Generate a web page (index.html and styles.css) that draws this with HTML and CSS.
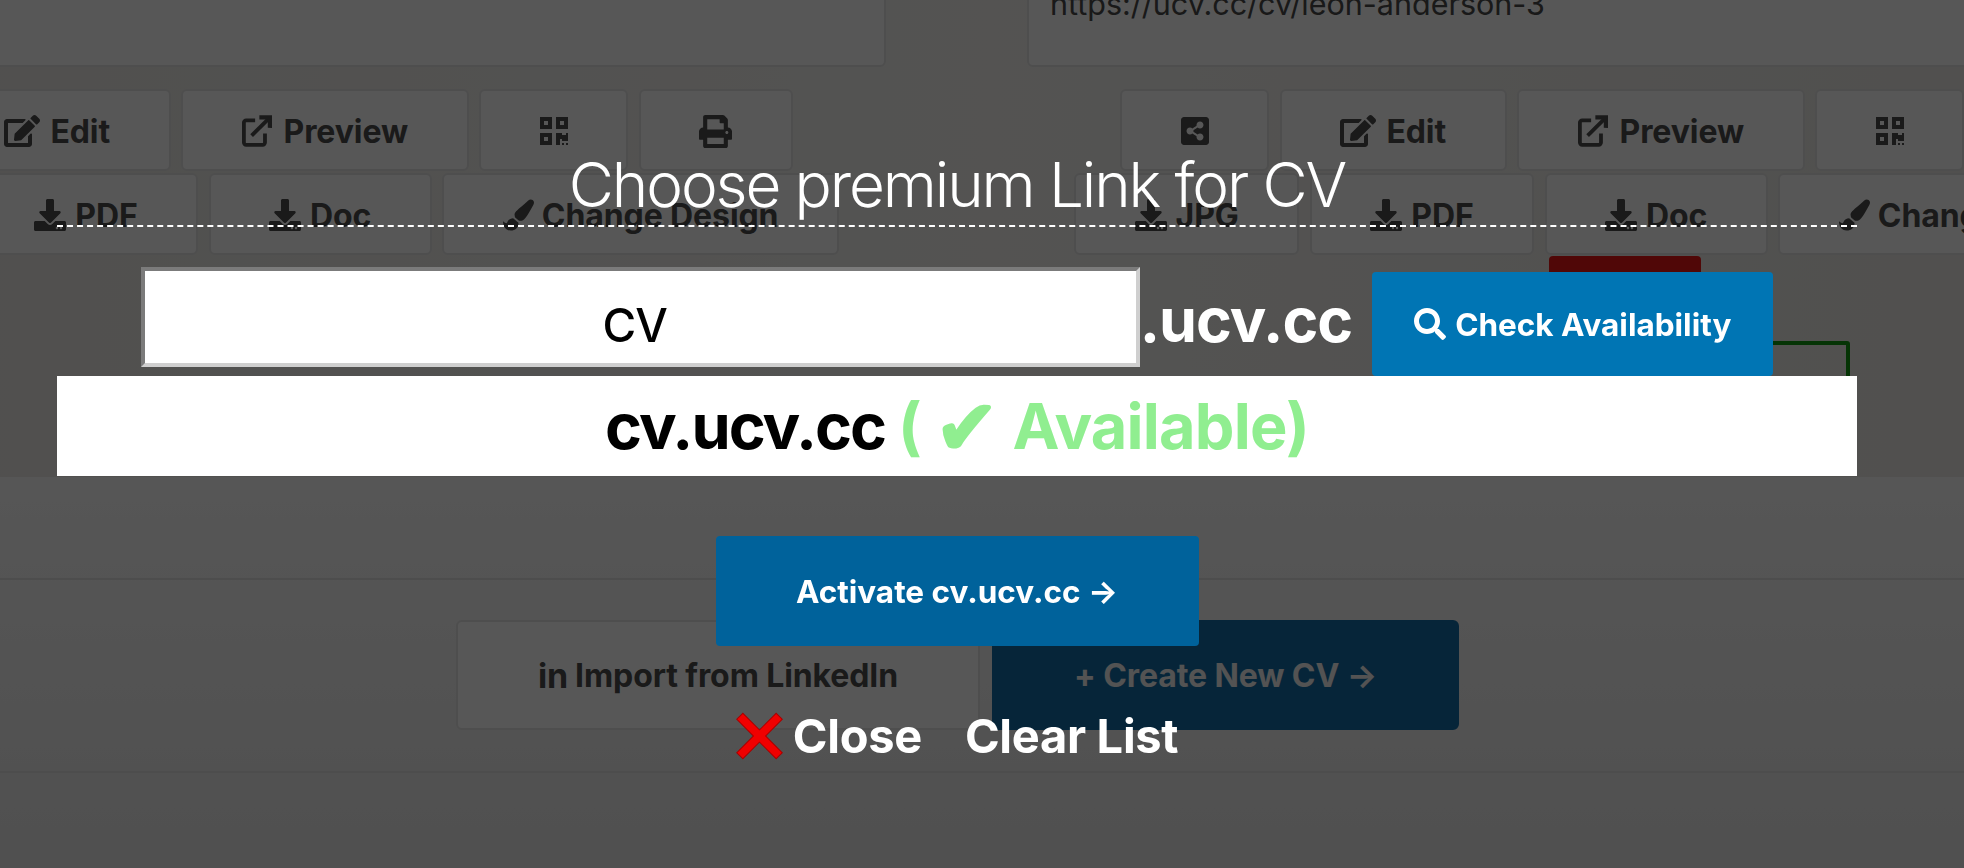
FILE: index.html
```html
<!DOCTYPE html>
<html lang="en">

<head>
    <meta charset="UTF-8">
    <meta name="viewport" content="width=device-width, initial-scale=1.0">
    <title>Choose premium Link for CV</title>
    <link rel="stylesheet" href="styles.css">
</head>

<body>
    <svg class="icon-defs" width="0" height="0" aria-hidden="true">
        <symbol id="i-edit" viewBox="0 0 576 512"><path d="M402.6 83.2l90.2 90.2c3.8 3.8 3.8 10 0 13.8L274.4 405.6l-92.8 10.3c-12.4 1.4-22.9-9.1-21.5-21.5l10.3-92.8L388.8 83.2c3.8-3.8 10-3.8 13.8 0zm162-22.9l-48.8-48.8c-15.2-15.2-39.9-15.2-55.2 0l-35.4 35.4c-3.8 3.8-3.8 10 0 13.8l90.2 90.2c3.8 3.8 10 3.8 13.8 0l35.4-35.4c15.2-15.3 15.2-40 0-55.2zM384 346.2V448H64V128h229.8c3.2 0 6.2-1.3 8.5-3.5l40-40c7.6-7.6 2.2-20.5-8.5-20.5H48C21.5 64 0 85.5 0 112v352c0 26.5 21.5 48 48 48h352c26.5 0 48-21.5 48-48V306.2c0-10.7-12.9-16-20.5-8.5l-40 40c-2.2 2.3-3.5 5.3-3.5 8.5z"/></symbol>
        <symbol id="i-preview" viewBox="1.650 1 21.350 22.350"><path fill="none" stroke="currentColor" stroke-width="2.7" d="M11 4.600H4.600a1.600 1.600 0 0 0-1.600 1.600v14.200A1.600 1.600 0 0 0 4.600 22h11.800a1.600 1.600 0 0 0 1.600-1.600V14"/><path fill="none" stroke="currentColor" stroke-width="2.7" d="M8.500 15.500 20.500 3.500"/><path d="M14 1h9v9l-3-0.200V4h-6z"/></symbol>
        <symbol id="i-qr" viewBox="0 0 448 512"><path d="M0 224h192V32H0v192zM64 96h64v64H64V96zm192-64v192h192V32H256zm128 128h-64V96h64v64zM0 480h192V288H0v192zm64-128h64v64H64v-64zm352-64h32v128h-96v-32h-32v96h-64V288h96v32h64v-32zm0 160h32v32h-32v-32zm-64 0h32v32h-32v-32z"/></symbol>
        <symbol id="i-print" viewBox="0 0 512 512"><path d="M448 192V77.25c0-8.49-3.37-16.62-9.37-22.63L393.37 9.37c-6-6-14.14-9.37-22.63-9.37H96C78.33 0 64 14.33 64 32v160c-35.35 0-64 28.65-64 64v112c0 8.84 7.16 16 16 16h48v96c0 17.67 14.33 32 32 32h320c17.67 0 32-14.33 32-32v-96h48c8.84 0 16-7.16 16-16V256c0-35.35-28.65-64-64-64zm-64 256H128v-96h256v96zm0-224H128V64h192v48c0 8.84 7.16 16 16 16h48v96zm48 72c-13.25 0-24-10.75-24-24 0-13.26 10.75-24 24-24s24 10.74 24 24c0 13.25-10.75 24-24 24z"/></symbol>
        <symbol id="i-download" viewBox="0 0 512 512"><path d="M216 0h80c13.3 0 24 10.7 24 24v168h87.7c17.8 0 26.7 21.5 14.1 34.1L269.7 378.3c-7.5 7.5-19.8 7.5-27.3 0L90.1 226.1c-12.6-12.6-3.7-34.1 14.1-34.1H192V24c0-13.3 10.7-24 24-24zm296 376v112c0 13.3-10.7 24-24 24H24c-13.3 0-24-10.7-24-24V376c0-13.3 10.7-24 24-24h146.7l49 49c20.1 20.1 52.5 20.1 72.6 0l49-49H488c13.3 0 24 10.7 24 24zm-124 88c0-11-9-20-20-20s-20 9-20 20 9 20 20 20 20-9 20-20zm64 0c0-11-9-20-20-20s-20 9-20 20 9 20 20 20 20-9 20-20z"/></symbol>
        <symbol id="i-brush" viewBox="0 0 512 512"><path d="M167.02 309.34c-40.12 2.58-76.53 17.86-97.19 72.3-2.35 6.21-8 9.98-14.59 9.98-11.11 0-45.46-27.67-55.25-34.35C0 439.62 37.93 512 128 512c75.86 0 128-43.77 128-120.19 0-3.11-.65-6.08-.97-9.13l-88.01-73.34zM457.89 0c-15.16 0-29.37 6.71-40.21 16.45C213.27 199.05 192 203.34 192 257.09c0 13.7 3.25 26.76 8.73 38.7l63.82 53.18c7.21 1.8 14.64 3.03 22.39 3.03 62.11 0 98.11-45.47 211.16-256.46 7.38-14.35 13.9-29.85 13.9-45.99C512 20.64 486 0 457.89 0z"/></symbol>
        <symbol id="i-share" viewBox="0 0 448 512"><path d="M448 80v352c0 26.51-21.49 48-48 48H48c-26.51 0-48-21.49-48-48V80c0-26.51 21.49-48 48-48h352c26.51 0 48 21.49 48 48zM304 296c-14.562 0-27.823 5.561-37.783 14.671l-67.958-40.775a56.339 56.339 0 0 0 0-27.793l67.958-40.775C276.177 210.439 289.438 216 304 216c30.928 0 56-25.072 56-56s-25.072-56-56-56-56 25.072-56 56c0 4.797.605 9.453 1.74 13.897l-67.958 40.775C171.823 205.561 158.562 200 144 200c-30.928 0-56 25.072-56 56s25.072 56 56 56c14.562 0 27.823-5.561 37.783-14.671l67.958 40.775a56.088 56.088 0 0 0-1.74 13.897c0 30.928 25.072 56 56 56s56-25.072 56-56C360 321.072 334.928 296 304 296z"/></symbol>
        <symbol id="i-search" viewBox="0 0 512 512"><path d="M505 442.7L405.3 343c-4.5-4.5-10.6-7-17-7H372c27.6-35.3 44-79.7 44-128C416 93.1 322.9 0 208 0S0 93.1 0 208s93.1 208 208 208c48.3 0 92.7-16.4 128-44v16.3c0 6.4 2.5 12.5 7 17l99.7 99.7c9.4 9.4 24.6 9.4 33.9 0l28.3-28.3c9.4-9.4 9.4-24.6.1-34zM208 336c-70.7 0-128-57.2-128-128 0-70.7 57.2-128 128-128 70.7 0 128 57.2 128 128 0 70.7-57.2 128-128 128z"/></symbol>
    </svg>

    <div class="page">
        <div class="cv-list">
            <div class="cv-col">
                <div class="cv-card"></div>
                <div class="btn-row">
                    <a class="btn"><svg class="icon icon-share"><use href="#i-share"/></svg></a>
                    <a class="btn"><svg class="icon icon-edit"><use href="#i-edit"/></svg>Edit</a>
                    <a class="btn"><svg class="icon icon-preview"><use href="#i-preview"/></svg>Preview</a>
                    <a class="btn"><svg class="icon icon-qr"><use href="#i-qr"/></svg></a>
                    <a class="btn"><svg class="icon icon-print"><use href="#i-print"/></svg></a>
                </div>
                <div class="btn-row">
                    <a class="btn"><svg class="icon icon-download"><use href="#i-download"/></svg>JPG</a>
                    <a class="btn"><svg class="icon icon-download"><use href="#i-download"/></svg>PDF</a>
                    <a class="btn"><svg class="icon icon-download"><use href="#i-download"/></svg>Doc</a>
                    <a class="btn"><svg class="icon icon-brush"><use href="#i-brush"/></svg>Change Design</a>
                </div>
            </div>
            <div class="cv-col">
                <div class="cv-card">https://ucv.cc/cv/leon-anderson-3</div>
                <div class="btn-row">
                    <a class="btn"><svg class="icon icon-share"><use href="#i-share"/></svg></a>
                    <a class="btn"><svg class="icon icon-edit"><use href="#i-edit"/></svg>Edit</a>
                    <a class="btn"><svg class="icon icon-preview"><use href="#i-preview"/></svg>Preview</a>
                    <a class="btn"><svg class="icon icon-qr"><use href="#i-qr"/></svg></a>
                    <a class="btn"><svg class="icon icon-print"><use href="#i-print"/></svg></a>
                </div>
                <div class="btn-row">
                    <a class="btn"><svg class="icon icon-download"><use href="#i-download"/></svg>JPG</a>
                    <a class="btn"><svg class="icon icon-download"><use href="#i-download"/></svg>PDF</a>
                    <a class="btn"><svg class="icon icon-download"><use href="#i-download"/></svg>Doc</a>
                    <a class="btn"><svg class="icon icon-brush"><use href="#i-brush"/></svg>Change Design</a>
                </div>
                <a class="btn-delete"></a>
                <div class="premium-box"></div>
            </div>
        </div>
        <div class="create-row">
            <a class="btn btn-wide"><span class="in-logo">in</span>Import from LinkedIn</a>
            <a class="btn btn-wide btn-create">+ Create New CV →</a>
        </div>
    </div>

    <div class="modal">
        <div class="modal-inner">
            <h1 class="modal-title">Choose premium Link for CV</h1>
            <div class="domain-row">
                <input class="domain-input" type="text" value="CV">
                <span class="domain-suffix">.ucv.cc</span>
                <button class="check-button"><svg class="icon icon-search"><use href="#i-search"/></svg>Check Availability</button>
            </div>
            <div class="result-bar">cv.ucv.cc <span class="available">( <span class="tick">✔</span> Available)</span></div>
            <button class="activate-button">Activate cv.ucv.cc →</button>
            <div class="modal-links">
                <a class="modal-link">
                    <svg class="close-x" viewBox="0 0 48 48">
                        <path fill="#a80000" d="M7 0 24 17 41 0 48 7 31 24 48 41 41 48 24 31 7 48 0 41 17 24 0 7z"/>
                        <path fill="#f00000" d="M7 1.500 24 18.500 41 1.500 46.500 7 29.500 24 46.500 41 41 46.500 24 29.500 7 46.500 1.500 41 18.500 24 1.500 7z"/>
                    </svg>Close</a>
                <a class="modal-link">Clear List</a>
            </div>
        </div>
    </div>
</body>

</html>
```

FILE: styles.css
```css
* {
    box-sizing: border-box;
}

html,
body {
    height: 100%;
}

body {
    margin: 0;
    font-family: Inter, "Liberation Sans", sans-serif;
    overflow: hidden;
    background-color: #f2f2f2;
}

.icon-defs {
    position: absolute;
}

/* page behind the dialog */

.page {
    width: 100%;
    height: 100%;
    overflow: hidden;
    background: linear-gradient(180deg, #fcfcfc 480px, #e9e9e9 868px);
}

.cv-list {
    display: flex;
    gap: 141px;
    width: 2600px;
    height: 517px;
    margin: -40px 0 0 -309px;
    background: linear-gradient(90deg, #e9e7e3 0, #f5f4f1 50%, #e9e7e3 100%);
}

.cv-col {
    width: 1195px;
    flex: none;
    display: flex;
    flex-direction: column;
    align-items: center;
}

.cv-card {
    width: 100%;
    height: 107px;
    padding: 25px 21px 0;
    font-size: 30.500px;
    line-height: 34px;
    color: #4a4a4a;
    background-color: #ffffff;
    border: 2px solid #e4e4e4;
    border-radius: 6px;
}

.btn-row {
    display: flex;
    justify-content: center;
    gap: 10.500px;
    white-space: nowrap;
    margin-bottom: 2px;
}

.cv-card + .btn-row {
    margin-top: 22px;
}

.btn {
    display: flex;
    flex: none;
    align-items: center;
    justify-content: center;
    height: 82px;
    padding: 2px 58.500px 0;
    font-size: 32px;
    font-weight: 700;
    letter-spacing: -0.100px;
    color: #4c4c4c;
    background-color: #ffffff;
    border: 2px solid #e4e4e4;
    border-radius: 6px;
}

.icon {
    display: block;
    flex: none;
    fill: currentColor;
}

.icon-edit {
    width: 36px;
    height: 32px;
    margin-right: 10px;
}

.icon-preview {
    width: 30px;
    height: 32px;
    margin-right: 12px;
}

.icon-qr {
    width: 28px;
    height: 32px;
}

.icon-print {
    width: 33px;
    height: 33px;
}

.icon-share {
    width: 28px;
    height: 32px;
}

.icon-download {
    width: 32px;
    height: 32px;
    margin-right: 9px;
}

.icon-brush {
    width: 31px;
    height: 32px;
    margin-right: 8px;
}

.btn-delete {
    width: 152px;
    height: 70px;
    margin-top: -1px;
    background-color: #ea1717;
    border-radius: 4px;
}

.premium-box {
    width: 450px;
    height: 130px;
    margin-top: 15px;
    border: 4px solid #0f9a0f;
    border-radius: 3px;
}

.create-row {
    display: flex;
    justify-content: center;
    gap: 12px;
    width: 100%;
    margin-top: 101px;
    padding: 40px 49px 41px 0;
    border-top: 2px solid #e0e0e0;
    border-bottom: 2px solid #e0e0e0;
}

.btn-wide {
    height: 110px;
    padding: 0 80px;
}

.in-logo {
    font-size: 34px;
    margin-right: 7px;
}

.btn-create {
    color: #f2f2f2;
    background-color: #146da6;
    border-color: #146da6;
}

/* dialog */

.modal {
    position: fixed;
    top: 0;
    left: 0;
    width: 100%;
    height: 100%;
    background-color: rgba(0, 0, 0, 0.66);
    z-index: 10;
}

.modal-inner {
    display: flex;
    flex-direction: column;
    align-items: center;
    width: 1800px;
    margin-left: 57px;
    color: #ffffff;
}

.modal-title {
    width: 100%;
    height: 227px;
    margin: 0;
    padding-top: 150px;
    font-size: 62px;
    line-height: 70px;
    font-weight: 300;
    letter-spacing: -2.100px;
    text-align: center;
    border-bottom: 2px dashed #ffffff;
}

.domain-row {
    display: flex;
    align-items: flex-start;
    justify-content: center;
    margin-top: 40px;
}

.domain-input {
    width: 999px;
    height: 100px;
    padding: 16px 11px 0 0;
    font-family: inherit;
    font-size: 46px;
    font-weight: 500;
    letter-spacing: -1px;
    text-align: center;
    color: #000000;
    background-color: #ffffff;
    border: 4px inset #cfcfcf;
    border-radius: 0;
}

.domain-suffix {
    margin: 18px 0 0 0;
    font-size: 61px;
    line-height: 70px;
    font-weight: 700;
    letter-spacing: -1px;
}

.check-button {
    display: flex;
    align-items: center;
    justify-content: center;
    width: 401px;
    height: 104px;
    margin: 5px 0 0 20px;
    font-family: inherit;
    font-size: 31.500px;
    font-weight: 700;
    color: #ffffff;
    background-color: #0075b4;
    border: none;
    border-radius: 4px;
}

.icon-search {
    width: 32px;
    height: 32px;
    margin-right: 9px;
}

.result-bar {
    width: 100%;
    height: 100px;
    font-size: 63px;
    line-height: 100px;
    font-weight: 700;
    letter-spacing: -2px;
    text-align: center;
    color: #000000;
    background-color: #ffffff;
}

.available {
    letter-spacing: -0.800px;
    color: #90ee90;
}

.tick {
    font-size: 76px;
    line-height: 60px;
    vertical-align: -5px;
}

.activate-button {
    width: 483px;
    height: 110px;
    margin-top: 60px;
    font-family: inherit;
    font-size: 31.500px;
    font-weight: 700;
    color: #ffffff;
    background-color: #00629b;
    border: none;
    border-radius: 4px;
}

.modal-links {
    display: flex;
    align-items: center;
    gap: 43px;
    margin-top: 66px;
    font-size: 47px;
    line-height: 48px;
    font-weight: 700;
    letter-spacing: -0.300px;
}

.modal-link {
    display: flex;
    align-items: center;
}

.close-x {
    width: 47px;
    height: 48px;
    margin-right: 10px;
}
```
